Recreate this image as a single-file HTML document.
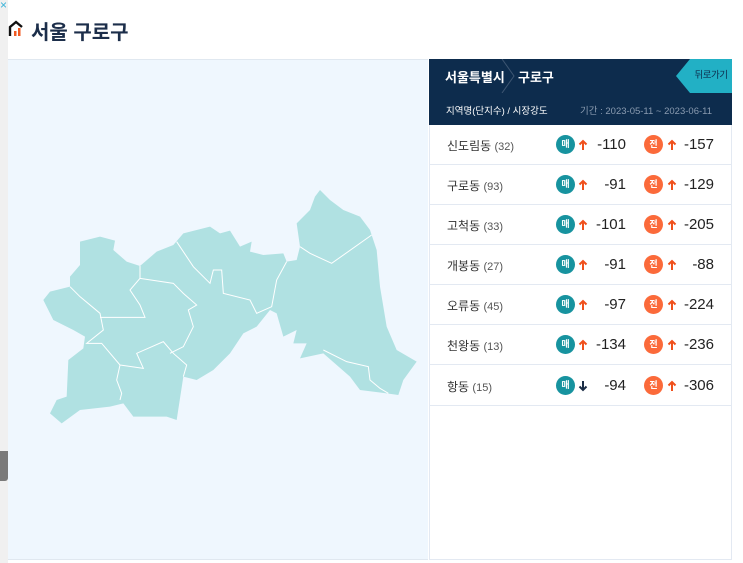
<!DOCTYPE html>
<html><head><meta charset="utf-8"><style>
*{margin:0;padding:0;box-sizing:border-box}
body{width:743px;height:563px;overflow:hidden;background:#fff;font-family:"Liberation Sans","Noto Sans CJK KR",sans-serif;position:relative}
.abs{position:absolute}
.row{position:absolute;left:430px;width:301px;height:40px;border-bottom:1px solid #e3e9f2;font-size:12px;color:#333}
.row .n{position:absolute;left:17px;top:12px}
.row .n small{font-size:11px;color:#555}
.b{position:absolute;top:10px;width:19px;height:19px;border-radius:10px;color:#fff;font-size:9px;font-weight:bold;text-align:center;line-height:19px}
.m{left:126px;background:#17939f}
.j{left:214px;background:#fb6a3a}
.ar{position:absolute;top:14px}
.v{position:absolute;top:11px;font-size:15px;color:#222;text-align:right;width:50px}
</style></head><body>
<svg width="0" height="0" style="position:absolute"><defs>
<symbol id="u" viewBox="0 0 10 12"><path d="M5 11V2M1.5 5.5L5 2L8.5 5.5" fill="none" stroke="#f0501c" stroke-width="2"/></symbol>
<symbol id="d" viewBox="0 0 10 12"><path d="M5 1V10M1.5 6.5L5 10L8.5 6.5" fill="none" stroke="#1a2c45" stroke-width="2"/></symbol>
</defs></svg>
<div class="abs" style="left:0;top:0;width:8px;height:563px;background:#f0f0f0"></div>
<div class="abs" style="left:0;top:451px;width:8px;height:30px;background:#7a7a7a;border-radius:0 0 3px 0"></div>
<div class="abs" style="left:0;top:-2px;font-size:12px;color:#3ab3d8">×</div>
<svg class="abs" style="left:8px;top:20px" width="18" height="18" viewBox="0 0 18 18"><path d="M2 16V7L8 2L14 7" fill="none" stroke="#111" stroke-width="2.4"/><rect x="6" y="11" width="2.5" height="5" fill="#f05a22"/><rect x="10" y="8" width="2.5" height="8" fill="#f05a22"/></svg>
<div class="abs" style="left:31px;top:16px;font-size:20px;color:#1c2e4a;font-weight:bold">서울 구로구</div>
<div class="abs" style="left:8px;top:59px;width:420px;height:501px;background:#eff7fe;border-top:1px solid #e0e8f0;border-bottom:1px solid #e0e8f0"></div>
<svg class="abs" style="left:30px;top:180px" width="400" height="250" viewBox="0 0 1200 750">
<path fill="#b0e1e2" d="M150 185L210 170L255 182L250 210L290 245L330 258L380 215L430 195L460 160L500 150L540 140L570 160L600 152L630 200L665 185L660 215L700 225L760 220L770 245L800 240L810 200L800 130L840 90L855 50L870 30L900 60L940 90L990 110L1020 150L1040 210L1050 320L1070 440L1100 510L1160 545L1120 600L1105 645L1070 640L990 630L960 590L880 520L810 535L830 490L790 490L800 450L760 470L740 400L720 390L680 440L640 460L600 520L550 570L500 600L460 590L440 720L410 710L310 710L280 670L240 680L150 690L95 730L60 700L80 660L110 650L115 540L160 505L165 470L130 450L70 420L40 360L60 335L120 320L120 290L150 255Z"/>
<g fill="none" stroke="#fff" stroke-width="3">
<path d="M120 320L150 350L210 400L220 450L170 490L215 490L270 555L340 565L320 520L400 485L430 520L470 555L460 590"/>
<path d="M210 412L345 412L330 375L300 330L330 295L330 258"/>
<path d="M330 295L430 310L460 340L500 375L475 390L490 440L460 500L420 520"/>
<path d="M440 185L490 260L540 310L550 270L575 270L580 340L660 360L680 400L725 380L740 300L770 245"/>
<path d="M270 555L260 600L275 640L270 660"/>
<path d="M810 200L840 220L905 250L1025 165"/>
<path d="M880 510L950 545L1015 560L1020 600L1050 625L1075 640"/>
</g></svg>
<div class="abs" style="left:429px;top:59px;width:303px;height:501px;border:1px solid #e3e9f2;border-top:none"></div>
<div class="abs" style="left:429px;top:59px;width:303px;height:34px;background:#0d2c4d"></div>
<div class="abs" style="left:445px;top:67px;color:#fff;font-size:13px;font-weight:bold">서울특별시</div>
<svg class="abs" style="left:500px;top:59px" width="16" height="34"><path d="M2 0L14 17L2 34" fill="none" stroke="#3e5672" stroke-width="1"/></svg>
<div class="abs" style="left:518px;top:67px;color:#fff;font-size:13px;font-weight:bold">구로구</div>
<div class="abs" style="left:676px;top:59px;width:0;height:0;border-top:17px solid transparent;border-bottom:17px solid transparent;border-right:14px solid #22b0c5"></div>
<div class="abs" style="left:690px;top:59px;width:42px;height:34px;background:#22b0c5;color:#0d2c4d;font-size:9.5px;line-height:34px;text-align:center;white-space:nowrap;letter-spacing:-0.5px">뒤로가기</div>
<div class="abs" style="left:429px;top:93px;width:303px;height:32px;background:#0d2c4d"></div>
<div class="abs" style="left:446px;top:103px;color:#fff;font-size:9.5px">지역명(단지수) / 시장강도</div>
<div class="abs" style="left:580px;top:103px;color:#8a9bb0;font-size:9.5px">기간 : 2023-05-11 ~ 2023-06-11</div>

<div class="row" style="top:125px"><span class="n">신도림동 <small>(32)</small></span><span class="b m">매</span><svg class="ar" style="left:148px" width="10" height="12"><use href="#u"/></svg><span class="v" style="left:146px">-110</span><span class="b j">전</span><svg class="ar" style="left:237px" width="10" height="12"><use href="#u"/></svg><span class="v" style="left:234px">-157</span></div>
<div class="row" style="top:165px"><span class="n">구로동 <small>(93)</small></span><span class="b m">매</span><svg class="ar" style="left:148px" width="10" height="12"><use href="#u"/></svg><span class="v" style="left:146px">-91</span><span class="b j">전</span><svg class="ar" style="left:237px" width="10" height="12"><use href="#u"/></svg><span class="v" style="left:234px">-129</span></div>
<div class="row" style="top:205px"><span class="n">고척동 <small>(33)</small></span><span class="b m">매</span><svg class="ar" style="left:148px" width="10" height="12"><use href="#u"/></svg><span class="v" style="left:146px">-101</span><span class="b j">전</span><svg class="ar" style="left:237px" width="10" height="12"><use href="#u"/></svg><span class="v" style="left:234px">-205</span></div>
<div class="row" style="top:245px"><span class="n">개봉동 <small>(27)</small></span><span class="b m">매</span><svg class="ar" style="left:148px" width="10" height="12"><use href="#u"/></svg><span class="v" style="left:146px">-91</span><span class="b j">전</span><svg class="ar" style="left:237px" width="10" height="12"><use href="#u"/></svg><span class="v" style="left:234px">-88</span></div>
<div class="row" style="top:285px"><span class="n">오류동 <small>(45)</small></span><span class="b m">매</span><svg class="ar" style="left:148px" width="10" height="12"><use href="#u"/></svg><span class="v" style="left:146px">-97</span><span class="b j">전</span><svg class="ar" style="left:237px" width="10" height="12"><use href="#u"/></svg><span class="v" style="left:234px">-224</span></div>
<div class="row" style="top:325px"><span class="n">천왕동 <small>(13)</small></span><span class="b m">매</span><svg class="ar" style="left:148px" width="10" height="12"><use href="#u"/></svg><span class="v" style="left:146px">-134</span><span class="b j">전</span><svg class="ar" style="left:237px" width="10" height="12"><use href="#u"/></svg><span class="v" style="left:234px">-236</span></div>
<div class="row" style="top:366px"><span class="n">항동 <small>(15)</small></span><span class="b m">매</span><svg class="ar" style="left:148px" width="10" height="12"><use href="#d"/></svg><span class="v" style="left:146px">-94</span><span class="b j">전</span><svg class="ar" style="left:237px" width="10" height="12"><use href="#u"/></svg><span class="v" style="left:234px">-306</span></div>
</body></html>
